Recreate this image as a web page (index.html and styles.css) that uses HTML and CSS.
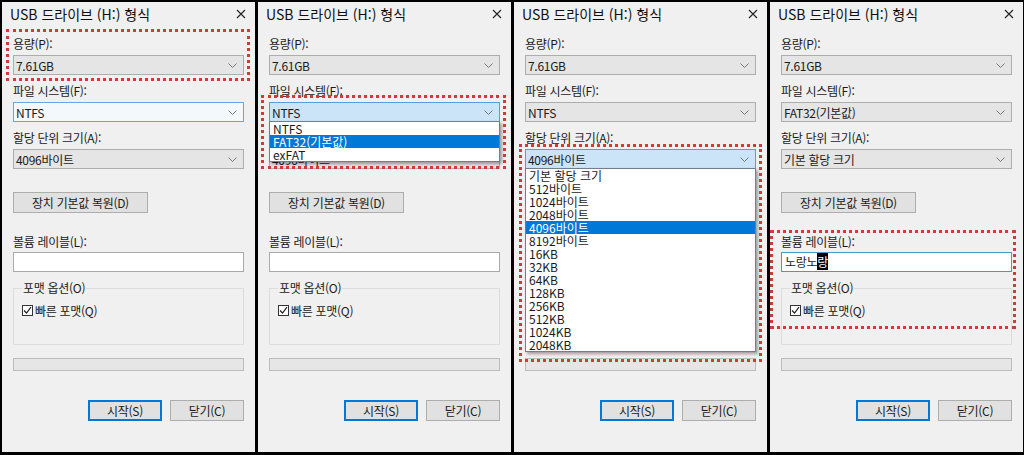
FILE: index.html
```html
<!DOCTYPE html>
<html lang="ko">
<head>
  <meta charset="UTF-8">
  <title>USB 드라이브 (H:) 형식</title>
  <link rel="stylesheet" href="styles.css">
</head>
<body>
  <!-- 1: 용량 -->
  <div class="dlg">
    <div class="title"><span>USB 드라이브 (H:) 형식</span><svg class="close" width="10" height="10" viewBox="0 0 10 10"><path d="M1 1 9 9M9 1 1 9" stroke="#222" stroke-width="1.1"/></svg></div>
    <div class="body">
      <div class="field"><div class="lbl">용량(P):</div><div class="combo"><span>7.61GB</span><svg width="9" height="5" viewBox="0 0 9 5"><path d="M.5.5 4.5 4.5 8.5.5" fill="none" stroke="#777"/></svg></div></div>
      <div class="field"><div class="lbl">파일 시스템(F):</div><div class="combo focus"><span>NTFS</span><svg width="9" height="5" viewBox="0 0 9 5"><path d="M.5.5 4.5 4.5 8.5.5" fill="none" stroke="#777"/></svg></div></div>
      <div class="field"><div class="lbl">할당 단위 크기(A):</div><div class="combo"><span>4096바이트</span><svg width="9" height="5" viewBox="0 0 9 5"><path d="M.5.5 4.5 4.5 8.5.5" fill="none" stroke="#777"/></svg></div></div>
      <div class="btn reset">장치 기본값 복원(D)</div>
      <div class="field vol"><div class="lbl">볼륨 레이블(L):</div><div class="text"></div></div>
      <fieldset><legend>포맷 옵션(O)</legend><div class="chk"><span class="box"><svg width="9" height="9" viewBox="0 0 9 9"><path d="M1 4.5 3.5 7 8 1.2" fill="none" stroke="#222" stroke-width="1.2"/></svg></span>빠른 포맷(Q)</div></fieldset>
      <div class="progress"></div>
      <div class="actions"><div class="btn default">시작(S)</div><div class="btn">닫기(C)</div></div>
    </div>
    <div class="mark m1"></div>
  </div>

  <!-- 2: 파일 시스템 -->
  <div class="dlg">
    <div class="title"><span>USB 드라이브 (H:) 형식</span><svg class="close" width="10" height="10" viewBox="0 0 10 10"><path d="M1 1 9 9M9 1 1 9" stroke="#222" stroke-width="1.1"/></svg></div>
    <div class="body">
      <div class="field"><div class="lbl">용량(P):</div><div class="combo"><span>7.61GB</span><svg width="9" height="5" viewBox="0 0 9 5"><path d="M.5.5 4.5 4.5 8.5.5" fill="none" stroke="#777"/></svg></div></div>
      <div class="field"><div class="lbl">파일 시스템(F):</div><div class="combo open"><span>NTFS</span><svg width="9" height="5" viewBox="0 0 9 5"><path d="M.5.5 4.5 4.5 8.5.5" fill="none" stroke="#777"/></svg>
        <ul class="list">
          <li>NTFS</li>
          <li class="sel">FAT32(기본값)</li>
          <li>exFAT</li>
        </ul>
      </div></div>
      <div class="field"><div class="lbl">할당 단위 크기(A):</div><div class="combo"><span>4096바이트</span><svg width="9" height="5" viewBox="0 0 9 5"><path d="M.5.5 4.5 4.5 8.5.5" fill="none" stroke="#777"/></svg></div></div>
      <div class="btn reset">장치 기본값 복원(D)</div>
      <div class="field vol"><div class="lbl">볼륨 레이블(L):</div><div class="text"></div></div>
      <fieldset><legend>포맷 옵션(O)</legend><div class="chk"><span class="box"><svg width="9" height="9" viewBox="0 0 9 9"><path d="M1 4.5 3.5 7 8 1.2" fill="none" stroke="#222" stroke-width="1.2"/></svg></span>빠른 포맷(Q)</div></fieldset>
      <div class="progress"></div>
      <div class="actions"><div class="btn default">시작(S)</div><div class="btn">닫기(C)</div></div>
    </div>
    <div class="mark m2"></div>
  </div>

  <!-- 3: 할당 단위 크기 -->
  <div class="dlg">
    <div class="title"><span>USB 드라이브 (H:) 형식</span><svg class="close" width="10" height="10" viewBox="0 0 10 10"><path d="M1 1 9 9M9 1 1 9" stroke="#222" stroke-width="1.1"/></svg></div>
    <div class="body">
      <div class="field"><div class="lbl">용량(P):</div><div class="combo"><span>7.61GB</span><svg width="9" height="5" viewBox="0 0 9 5"><path d="M.5.5 4.5 4.5 8.5.5" fill="none" stroke="#777"/></svg></div></div>
      <div class="field"><div class="lbl">파일 시스템(F):</div><div class="combo"><span>NTFS</span><svg width="9" height="5" viewBox="0 0 9 5"><path d="M.5.5 4.5 4.5 8.5.5" fill="none" stroke="#777"/></svg></div></div>
      <div class="field"><div class="lbl">할당 단위 크기(A):</div><div class="combo open"><span>4096바이트</span><svg width="9" height="5" viewBox="0 0 9 5"><path d="M.5.5 4.5 4.5 8.5.5" fill="none" stroke="#777"/></svg>
        <ul class="list">
          <li>기본 할당 크기</li>
          <li>512바이트</li>
          <li>1024바이트</li>
          <li>2048바이트</li>
          <li class="sel">4096바이트</li>
          <li>8192바이트</li>
          <li>16KB</li>
          <li>32KB</li>
          <li>64KB</li>
          <li>128KB</li>
          <li>256KB</li>
          <li>512KB</li>
          <li>1024KB</li>
          <li>2048KB</li>
        </ul>
      </div></div>
      <div class="btn reset">장치 기본값 복원(D)</div>
      <div class="field vol"><div class="lbl">볼륨 레이블(L):</div><div class="text"></div></div>
      <fieldset><legend>포맷 옵션(O)</legend><div class="chk"><span class="box"><svg width="9" height="9" viewBox="0 0 9 9"><path d="M1 4.5 3.5 7 8 1.2" fill="none" stroke="#222" stroke-width="1.2"/></svg></span>빠른 포맷(Q)</div></fieldset>
      <div class="progress"></div>
      <div class="actions"><div class="btn default">시작(S)</div><div class="btn">닫기(C)</div></div>
    </div>
    <div class="mark m3"></div>
  </div>

  <!-- 4: 볼륨 레이블 -->
  <div class="dlg">
    <div class="title"><span>USB 드라이브 (H:) 형식</span><svg class="close" width="10" height="10" viewBox="0 0 10 10"><path d="M1 1 9 9M9 1 1 9" stroke="#222" stroke-width="1.1"/></svg></div>
    <div class="body">
      <div class="field"><div class="lbl">용량(P):</div><div class="combo"><span>7.61GB</span><svg width="9" height="5" viewBox="0 0 9 5"><path d="M.5.5 4.5 4.5 8.5.5" fill="none" stroke="#777"/></svg></div></div>
      <div class="field"><div class="lbl">파일 시스템(F):</div><div class="combo"><span>FAT32(기본값)</span><svg width="9" height="5" viewBox="0 0 9 5"><path d="M.5.5 4.5 4.5 8.5.5" fill="none" stroke="#777"/></svg></div></div>
      <div class="field"><div class="lbl">할당 단위 크기(A):</div><div class="combo"><span>기본 할당 크기</span><svg width="9" height="5" viewBox="0 0 9 5"><path d="M.5.5 4.5 4.5 8.5.5" fill="none" stroke="#777"/></svg></div></div>
      <div class="btn reset">장치 기본값 복원(D)</div>
      <div class="field vol"><div class="lbl">볼륨 레이블(L):</div><div class="text focus">노랑노<span class="ime">랑</span></div></div>
      <fieldset><legend>포맷 옵션(O)</legend><div class="chk"><span class="box"><svg width="9" height="9" viewBox="0 0 9 9"><path d="M1 4.5 3.5 7 8 1.2" fill="none" stroke="#222" stroke-width="1.2"/></svg></span>빠른 포맷(Q)</div></fieldset>
      <div class="progress"></div>
      <div class="actions"><div class="btn default">시작(S)</div><div class="btn">닫기(C)</div></div>
    </div>
    <div class="mark m4"></div>
  </div>
</body>
</html>
```

FILE: styles.css
```css
*{margin:0;padding:0;box-sizing:border-box;}
html,body{width:100%;height:100%;overflow:hidden;}
body{background:#000;display:flex;gap:3px;padding:2px 1px 3px 2px;font:12px "Noto Sans CJK KR","Noto Sans",sans-serif;color:#1a1a1a;}

.dlg{width:253px;flex:none;background:#f0f0f0;position:relative;}
.title{height:24px;display:flex;align-items:center;justify-content:space-between;padding:0 9px 0 8px;font-size:14px;color:#111;}
.body{padding:11px 11px 0;letter-spacing:-0.3px;}

.lbl{height:14px;line-height:14px;margin-bottom:4px;}
.field+.field{margin-top:9px;}
.combo{height:20px;border:1px solid #adadad;background:#e5e5e5;display:flex;align-items:center;justify-content:space-between;padding:0 6px 0 2px;position:relative;}
.combo.focus{background:#f3f8fd;border-color:#6aa6dd;}
.combo.open{background:#cce4f7;border-color:#569de5;}

.list{position:absolute;top:100%;left:-1px;right:-1px;background:#fff;border:1px solid #6f7f8f;box-shadow:2px 2px 3px rgba(0,0,0,.35);z-index:2;list-style:none;}
.list li{height:13px;line-height:13px;padding-left:3px;letter-spacing:0;}
.list li.sel{background:#0078d7;color:#fff;}

.btn{height:21px;border:1px solid #adadad;background:#e1e1e1;display:flex;align-items:center;justify-content:center;}
.reset{width:135px;margin-top:23px;}
.field.vol{margin-top:22px;}
.vol .lbl{margin-bottom:3px;}
.text{height:20px;border:1px solid #a9a9a9;background:#fff;padding-left:3px;line-height:18px;}
.text.focus{border-color:#4f94cf;}
.ime{background:#000;color:#fff;}

fieldset{margin-top:9px;border:1px solid #dcdcdc;padding:9px 8px 28px;}
legend{padding:0 1px;line-height:14px;}
.chk{display:flex;align-items:center;gap:2px;height:12px;}
.box{width:11px;height:11px;border:1px solid #333;background:#fff;display:flex;align-items:center;justify-content:center;}

.progress{height:13px;margin-top:13px;border:1px solid #bcbcbc;background:#e6e6e6;}
.actions{display:flex;justify-content:flex-end;gap:8px;margin-top:29px;}
.actions .btn{width:74px;}
.btn.default{border:2px solid #0078d7;}

.mark{position:absolute;border:3px dotted #d23a3a;pointer-events:none;z-index:3;}
.m1{left:4px;top:27px;width:244px;height:52px;}
.m2{left:3px;top:93px;width:245px;height:74px;}
.m3{left:5px;top:142px;width:243px;height:218px;}
.m4{left:0;top:228px;width:246px;height:99px;}
```
